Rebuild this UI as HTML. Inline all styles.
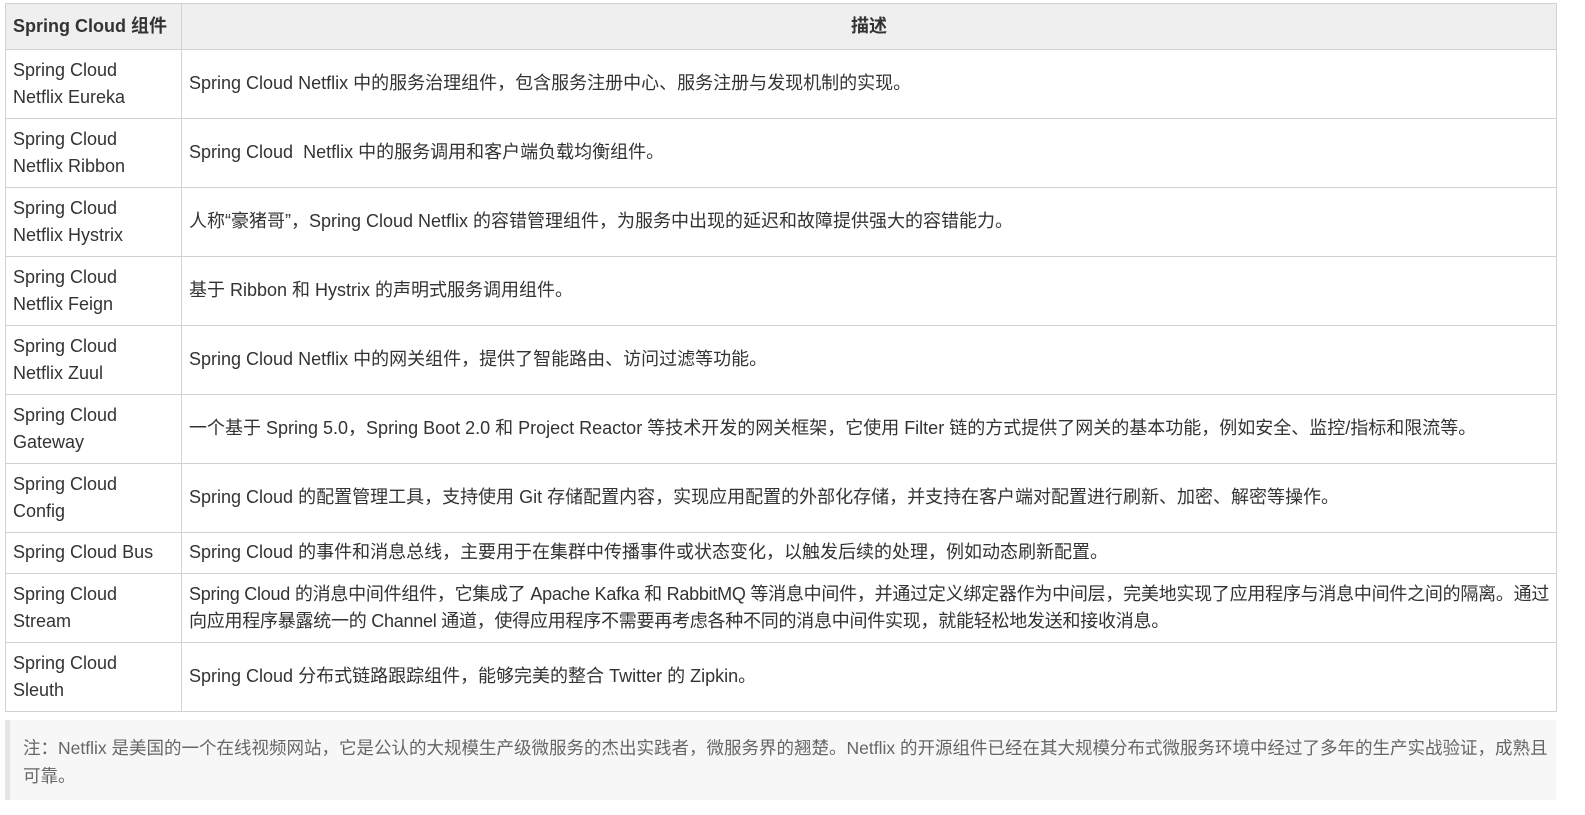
<!DOCTYPE html>
<html><head><meta charset="utf-8"><style>
body{margin:0;background:#fff;font-family:"Liberation Sans","Noto Sans CJK SC",sans-serif;color:#333;font-size:18px;}
table{position:absolute;left:5px;top:3px;width:1552px;border-collapse:collapse;table-layout:fixed;}
td,th{border:1px solid #d2d2d2;padding:0 7px;line-height:27.5px;vertical-align:middle;text-align:left;}
td:first-child{white-space:nowrap;}
td.nw{white-space:nowrap;letter-spacing:-0.25px;}
th{background:#efefef;font-weight:bold;height:45px;}
th.c{text-align:center;}
tr.r td{height:68px;}
tr.s td{height:40px;}
.q{position:absolute;left:5px;top:720px;width:1551px;height:80px;background:#f7f7f7;border-left:5px solid #e5e5e5;box-sizing:border-box;padding:15px 13px;color:#666;font-size:17.5px;line-height:27.5px;white-space:nowrap;}
</style></head><body>
<table>
<colgroup><col style="width:176px"><col></colgroup>
<tr><th>Spring Cloud 组件</th><th class="c">描述</th></tr>
<tr class="r"><td>Spring Cloud<br>Netflix Eureka</td><td>Spring Cloud Netflix 中的服务治理组件，包含服务注册中心、服务注册与发现机制的实现。</td></tr>
<tr class="r"><td>Spring Cloud<br>Netflix Ribbon</td><td>Spring Cloud&nbsp; Netflix 中的服务调用和客户端负载均衡组件。</td></tr>
<tr class="r"><td>Spring Cloud<br>Netflix Hystrix</td><td>人称“豪猪哥”，Spring Cloud Netflix 的容错管理组件，为服务中出现的延迟和故障提供强大的容错能力。</td></tr>
<tr class="r"><td>Spring Cloud<br>Netflix Feign</td><td>基于 Ribbon 和 Hystrix 的声明式服务调用组件。</td></tr>
<tr class="r"><td>Spring Cloud<br>Netflix Zuul</td><td>Spring Cloud Netflix 中的网关组件，提供了智能路由、访问过滤等功能。</td></tr>
<tr class="r"><td>Spring Cloud<br>Gateway</td><td>一个基于 Spring 5.0，Spring Boot 2.0 和 Project Reactor 等技术开发的网关框架，它使用 Filter 链的方式提供了网关的基本功能，例如安全、监控/指标和限流等。</td></tr>
<tr class="r"><td>Spring Cloud<br>Config</td><td>Spring Cloud 的配置管理工具，支持使用 Git 存储配置内容，实现应用配置的外部化存储，并支持在客户端对配置进行刷新、加密、解密等操作。</td></tr>
<tr class="s"><td>Spring Cloud Bus</td><td>Spring Cloud 的事件和消息总线，主要用于在集群中传播事件或状态变化，以触发后续的处理，例如动态刷新配置。</td></tr>
<tr class="r"><td>Spring Cloud<br>Stream</td><td class="nw">Spring Cloud 的消息中间件组件，它集成了 Apache Kafka 和 RabbitMQ 等消息中间件，并通过定义绑定器作为中间层，完美地实现了应用程序与消息中间件之间的隔离。通过<br>向应用程序暴露统一的 Channel 通道，使得应用程序不需要再考虑各种不同的消息中间件实现，就能轻松地发送和接收消息。</td></tr>
<tr class="r"><td>Spring Cloud<br>Sleuth</td><td>Spring Cloud 分布式链路跟踪组件，能够完美的整合 Twitter 的 Zipkin。</td></tr>
</table>
<div class="q">注：Netflix 是美国的一个在线视频网站，它是公认的大规模生产级微服务的杰出实践者，微服务界的翘楚。Netflix 的开源组件已经在其大规模分布式微服务环境中经过了多年的生产实战验证，成熟且<br>可靠。</div>
</body></html>
